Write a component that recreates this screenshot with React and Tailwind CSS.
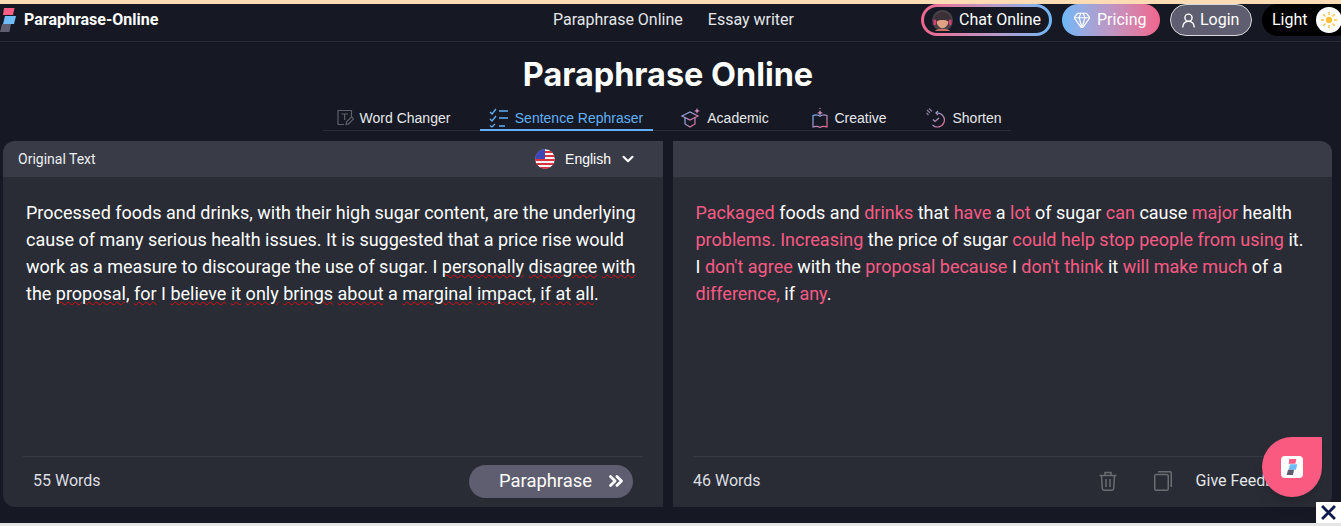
import { ChevronDown, ChevronsRight, Gem, UserRound } from 'lucide-react';

const tabs = [
  { label: 'Word Changer', icon: WordIcon, width: 'w-[141px]' },
  { label: 'Sentence Rephraser', icon: ListIcon, width: 'w-[173px]', active: true },
  { label: 'Academic', icon: CapIcon, width: 'w-[113px]' },
  { label: 'Creative', icon: BookIcon, width: 'w-[104px]' },
  { label: 'Shorten', icon: ShortenIcon, width: 'w-[93px]' },
];

const changed = [
  ['Packaged', true], [' foods and ', false], ['drinks', true], [' that ', false], ['have', true], [' a ', false],
  ['lot', true], [' of sugar ', false], ['can', true], [' cause ', false], ['major', true], [' health ', false],
  ['problems.', true], [' ', false], ['Increasing', true], [' the price of sugar ', false],
  ['could help stop people from using', true], [' it. I ', false], ["don't agree", true], [' with the ', false],
  ['proposal because', true], [' I ', false], ["don't think", true], [' it ', false], ['will make much', true],
  [' of a ', false], ['difference,', true], [' if ', false], ['any', true], ['.', false],
];

function Logo({ className }) {
  return (
    <svg viewBox="0 0 16 24" className={className}>
      <path d="M4 0h10.500L13 7H3z" fill="#ff5c85" />
      <path d="M5 8h11l-2 8H3z" fill="#6fbcf8" />
      <path d="M2 16h9l-1.500 8H0z" fill="#5f5e70" />
    </svg>
  );
}

function Grad({ id }) {
  return (
    <defs>
      <linearGradient id={id} x1="0" y1="0" x2="1" y2="1">
        <stop offset="0" stopColor="#6fb7f5" />
        <stop offset="1" stopColor="#f0648c" />
      </linearGradient>
    </defs>
  );
}

function WordIcon() {
  return (
    <svg viewBox="0 0 18 18" fill="none" stroke="#5f6068" strokeWidth="1.2" className="h-[18px] w-[18px]">
      <path d="M8 15.500H2V1.500h13.500v6" />
      <path d="M5.500 5h6.500M8.700 5v6" />
      <path d="M10 15.500l.6-2.600 5-5 2 2-5 5z" />
    </svg>
  );
}

function ListIcon() {
  return (
    <svg viewBox="0 0 20 20" fill="none" stroke="#62b0f7" strokeWidth="1.3" className="h-5 w-5">
      <path d="M1 4l2 2 4-5M1 11l2 2 4-5M1 17.500l2 1.500 3-3" />
      <path d="M10 3h9M10 10h9M10 18h6" />
    </svg>
  );
}

function CapIcon() {
  return (
    <svg viewBox="0 0 20 20" fill="none" stroke="url(#cap)" strokeWidth="1.2" className="h-5 w-5">
      <Grad id="cap" />
      <path d="M1 8l8-4 8 4-8 4z" />
      <path d="M4 10v6l5 3 5-3v-6" />
      <path d="M2 8.500v5" />
      <path d="M16 0l.9 2 2 .9-2 .9-.9 2-.9-2-2-.9 2-.9z" fill="#c58bb6" stroke="none" />
    </svg>
  );
}

function BookIcon() {
  return (
    <svg viewBox="0 0 16 20" fill="none" stroke="url(#book)" strokeWidth="1.2" className="h-5 w-4">
      <Grad id="book" />
      <path d="M1 7.500c2.500-1 5-.8 7 .8 2-1.600 4.500-1.800 7-.8V19c-2.500-.8-5-.8-7 .5-2-1.300-4.500-1.300-7-.5z" />
      <path d="M8 8.300v11" />
      <path d="M8 2l.9 2 2 .9-2 .9-.9 2-.9-2-2-.9 2-.9z" fill="#c58bb6" stroke="none" />
      <path d="M8 0v1" stroke="#c58bb6" />
    </svg>
  );
}

function ShortenIcon() {
  return (
    <svg viewBox="0 0 20 20" fill="none" stroke="url(#short)" strokeWidth="1.200" className="h-5 w-5">
      <Grad id="short" />
      <path d="M11 5a7 7 0 1 1-4.500 12" />
      <path d="M12 3l-2 2 2 2" />
      <path d="M7 11.500l2 2 4-3.500" />
      <path d="M1 2l3 3M3 0.500l3 3M0.500 5l2 2" stroke="#8b7a9b" />
    </svg>
  );
}

function Avatar() {
  return (
    <svg viewBox="0 0 22 22" className="h-[21px] w-[21px]">
      <circle cx="11" cy="11" r="11" fill="#4a4148" />
      <path d="M2 11a9 9 0 0 1 18 0v4H2z" fill="#3a3036" />
      <path d="M5 12c3-2 9-2 12 0 0 4-3 7-6 7s-6-3-6-7z" fill="#dfa384" />
      <path d="M3 22c2-3 14-3 16 0z" fill="#c96f6a" />
      <rect x="1.500" y="10" width="3" height="6" rx="1.500" fill="#d43f78" />
      <rect x="17.500" y="10" width="3" height="6" rx="1.500" fill="#d43f78" />
    </svg>
  );
}

function Flag() {
  const stripes = [2, 6, 10, 14, 18];
  return (
    <svg viewBox="0 0 20 20" className="h-5 w-5 rounded-full">
      <circle cx="10" cy="10" r="10" fill="#f7f4f4" />
      {stripes.map((y) => (
        <rect key={y} x="0" y={y} width="20" height="2" fill="#d8313f" />
      ))}
      <rect x="0" y="0" width="10" height="10" fill="#3d46b5" />
    </svg>
  );
}

function SunIcon() {
  return (
    <svg viewBox="0 0 20 20" className="h-[18px] w-[18px]" fill="#fbbf36" stroke="#fbbf36" strokeWidth="1.500" strokeLinecap="round">
      <circle cx="10" cy="10" r="3.500" stroke="none" />
      <path d="M10 1.500v2.500M10 16v2.500M1.500 10H4M16 10h2.500M4 4l1.700 1.700M14.300 14.300 16 16M4 16l1.700-1.700M14.300 5.700 16 4" />
    </svg>
  );
}

function TrashIcon() {
  return (
    <svg viewBox="0 0 18 20" fill="none" stroke="#6b6c72" strokeWidth="1.500" className="h-5 w-[18px]">
      <path d="M0.500 4.500h17M6 4.500V1.500h6v3" />
      <path d="M2.500 4.500l.8 13c.1 1 .8 1.700 1.800 1.700h7.800c1 0 1.700-.7 1.800-1.700l.8-13" />
      <path d="M7 8v8M11 8v8" />
    </svg>
  );
}

function CopyIcon() {
  return (
    <svg viewBox="0 0 18 20" fill="none" stroke="#6b6c72" strokeWidth="1.500" className="h-5 w-[18px]">
      <rect x="0.750" y="3.500" width="13.500" height="15.750" rx="1.500" />
      <path d="M4 0.750h12c.8 0 1.250.5 1.250 1.250v14" />
    </svg>
  );
}

function Wavy({ children }) {
  return <span className="underline decoration-wavy decoration-[#e00c12] decoration-1 underline-offset-1">{children}</span>;
}

export default function App() {
  return (
    <div className="relative flex h-[526px] flex-col overflow-hidden bg-[#161923] font-['Roboto',sans-serif] text-white">
      <div className="h-1 shrink-0 bg-[#fddcb5]" />

      <header className="flex h-[38px] shrink-0 items-center border-b border-[#2a2d35] pb-[5px]">
        <Logo className="h-[24px] w-4 shrink-0" />
        <div className="ml-2 w-[529px] shrink-0 text-base font-bold">Paraphrase-Online</div>
        <nav className="flex w-[368px] shrink-0 gap-[25px] text-base text-[#e4e6ea]">
          <span>Paraphrase Online</span>
          <span>Essay writer</span>
        </nav>
        <div className="flex shrink-0 items-center gap-[10px]">
          <div className="rounded-full bg-gradient-to-r from-[#f0648c] to-[#6fb7f5] p-[3px]">
            <div className="flex h-[26px] w-[125px] items-center gap-[6px] rounded-full bg-[#161923] pl-[8px] text-base">
              <Avatar />
              Chat Online
            </div>
          </div>
          <div className="flex h-8 w-[98px] items-center gap-[6px] rounded-full bg-gradient-to-r from-[#6cb8f8] to-[#f0648c] pl-[11px] text-base">
            <Gem size={18} strokeWidth={1.6} />
            Pricing
          </div>
          <div className="flex h-8 w-[82px] items-center gap-[3px] rounded-full border border-[#d8d8dc] bg-[#5f5e70] pl-[9px] text-base">
            <UserRound size={17} strokeWidth={2} />
            Login
          </div>
          <div className="flex h-8 w-[90px] shrink-0 items-center gap-[8px] rounded-full bg-black pl-[10px] text-base">
            Light
            <span className="flex h-[26px] w-[26px] items-center justify-center rounded-full bg-white">
              <SunIcon />
            </span>
          </div>
        </div>
      </header>

      <h1 className="mt-[14px] h-[38px] shrink-0 pr-[5px] text-center font-['Inter',sans-serif] text-[32.4px] leading-[38px] font-bold">Paraphrase Online</h1>

      <div className="mt-[10px] flex shrink-0 justify-center pr-[8px]">
        <div className="flex h-[27px] w-[688px] gap-4 border-b border-[#2a2d35] font-['Liberation_Sans',sans-serif] text-sm text-[#e6e8ec]">
          {tabs.map((tab) => {
            const Icon = tab.icon;
            return (
              <div
                key={tab.label}
                className={`flex h-[27px] items-center justify-center gap-[6px] ${tab.width} ${tab.active ? 'border-b-2 border-[#62b0f7] pt-[2px] text-[#62b0f7]' : ''}`}
              >
                <Icon />
                {tab.label}
              </div>
            );
          })}
        </div>
      </div>

      <main className="mt-[10px] flex h-[366px] shrink-0 gap-[10px] pl-[3px]">
        <section className="flex w-[660px] flex-col rounded-tl-xl rounded-bl-xl bg-[#292c35]">
          <div className="flex h-9 shrink-0 items-center justify-between rounded-tl-xl bg-[#393c47] pr-[26px] pl-[15px]">
            <span className="text-sm text-[#eceef1]">Original Text</span>
            <div className="flex items-center font-['Liberation_Sans',sans-serif] text-sm">
              <Flag />
              <span className="ml-[10px]">English</span>
              <ChevronDown size={18} strokeWidth={2.8} className="ml-[8px]" />
            </div>
          </div>
          <div className="flex-1 px-[23px] pt-[22px] text-lg leading-[27px]">
            Processed foods and drinks, with their high sugar content, are the underlying cause of many serious health issues. It is suggested that a price rise would work as a measure to discourage the use of sugar. I <Wavy>personally</Wavy> <Wavy>disagree</Wavy> <Wavy>with</Wavy> the <Wavy>proposal,</Wavy> <Wavy>for</Wavy> I <Wavy>believe</Wavy> <Wavy>it</Wavy> <Wavy>only</Wavy> <Wavy>brings</Wavy> <Wavy>about</Wavy> a <Wavy>marginal</Wavy> <Wavy>impact,</Wavy> <Wavy>if</Wavy> <Wavy>at</Wavy> <Wavy>all</Wavy>.
          </div>
          <div className="mx-[20px] flex h-[51px] shrink-0 items-center justify-between border-t border-[#363944] px-[10px] pb-[2px]">
            <span className="text-base text-[#dcdee2]">55 Words</span>
            <div className="flex h-[33px] w-[164px] items-center justify-end rounded-full bg-[#5f5e70] pr-[6px] text-[18.4px]">
              Paraphrase
              <ChevronsRight size={22} strokeWidth={3} className="ml-[13px]" />
            </div>
          </div>
        </section>

        <section className="flex w-[659px] flex-col rounded-tr-xl rounded-br-xl bg-[#292c35]">
          <div className="h-9 shrink-0 rounded-tr-xl bg-[#393c47]" />
          <div className="flex-1 pt-[22px] pr-[24px] pl-[22.5px] text-lg leading-[27px]">
            {changed.map(([text, hit], i) => (
              <span key={i} className={hit ? 'text-[#fb5a84]' : ''}>{text}</span>
            ))}
          </div>
          <div className="mx-[20px] flex h-[51px] shrink-0 items-center overflow-hidden border-t border-[#363944] pb-[2px]">
            <span className="text-base text-[#dcdee2]">46 Words</span>
            <span className="ml-[338px]"><TrashIcon /></span>
            <span className="ml-[37px]"><CopyIcon /></span>
            <span className="ml-[24px] text-base whitespace-nowrap text-[#e4e6ea]">Give Feedback</span>
          </div>
        </section>
      </main>

      <div className="absolute top-[437px] left-[1262px] flex h-[60px] w-[60px] items-center justify-center rounded-full rounded-tr-lg bg-[#fb5a80] shadow-lg">
        <div className="flex h-[22px] w-[22px] items-center justify-center rounded-sm bg-white">
          <Logo className="h-4 w-3" />
        </div>
      </div>

      <div className="absolute top-[502px] left-[1316px] flex h-[21px] w-[25px] items-center justify-center bg-white">
        <svg viewBox="0 0 14 14" className="h-[15px] w-[15px]" fill="none" stroke="#0d1b4c" strokeWidth="2.600">
          <path d="M1 1l12 12M13 1L1 13" />
        </svg>
      </div>

      <div className="absolute right-0 bottom-0 left-0 h-[3px] bg-[#e5e5e5]" />
    </div>
  );
}
